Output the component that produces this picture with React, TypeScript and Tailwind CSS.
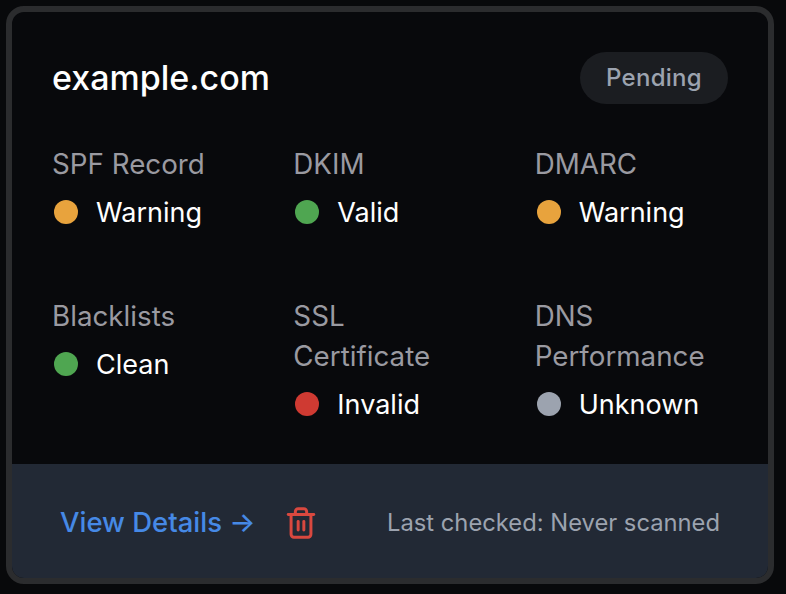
import { Trash2 } from "lucide-react";

type Status = "warning" | "valid" | "invalid" | "unknown";

const dotColors: Record<Status, string> = {
  warning: "bg-[#e8a33d]",
  valid: "bg-[#4fa651]",
  invalid: "bg-[#cf3a32]",
  unknown: "bg-[#9ca3af]",
};

const checks: { label: string; value: string; status: Status }[] = [
  { label: "SPF Record", value: "Warning", status: "warning" },
  { label: "DKIM", value: "Valid", status: "valid" },
  { label: "DMARC", value: "Warning", status: "warning" },
  { label: "Blacklists", value: "Clean", status: "valid" },
  { label: "SSL Certificate", value: "Invalid", status: "invalid" },
  { label: "DNS Performance", value: "Unknown", status: "unknown" },
];

function CheckItem({ label, value, status }: { label: string; value: string; status: Status }) {
  return (
    <div>
      <div className="text-[27.75px] leading-[40px] text-[#9a9aa1]">{label}</div>
      <div className="mt-2 flex h-10 items-center gap-[18px] pl-0.5">
        <span className={`h-6 w-6 shrink-0 rounded-full ${dotColors[status]}`} />
        <span className="pt-0.5 text-[27px] text-white">{value}</span>
      </div>
    </div>
  );
}

export default function App() {
  return (
    <div className="min-h-[594px] bg-[#08090b] p-1.5 font-['Inter',sans-serif]">
      <div className="w-[768px] overflow-hidden rounded-[18px] border-[6px] border-[#2b2c2e] bg-[#08090c]">
        <div className="p-10">
          <div className="flex h-[52px] items-center justify-between">
            <h2 className="pb-0.5 text-[34px] font-medium text-white">example.com</h2>
            <span className="flex h-[52px] w-[148px] items-center justify-center rounded-full bg-[#1b1d21] text-[24px] font-medium tracking-[0.3px] text-[#9ca3af]">
              Pending
            </span>
          </div>
          <div className="mt-10 grid grid-cols-3 gap-x-12 gap-y-16">
            {checks.map((c) => (
              <CheckItem key={c.label} {...c} />
            ))}
          </div>
        </div>
        <div className="flex h-[114px] items-center justify-between bg-[#222935] px-12 pt-[3px]">
          <div className="flex items-center gap-7">
            <a className="text-[27.5px] font-medium text-[#4689e6]">View Details →</a>
            <Trash2 className="h-[34px] w-[34px] text-[#d9483f]" strokeWidth={2.1} />
          </div>
          <span className="text-[23.75px] text-[#9ca3af]">Last checked: Never scanned</span>
        </div>
      </div>
    </div>
  );
}
